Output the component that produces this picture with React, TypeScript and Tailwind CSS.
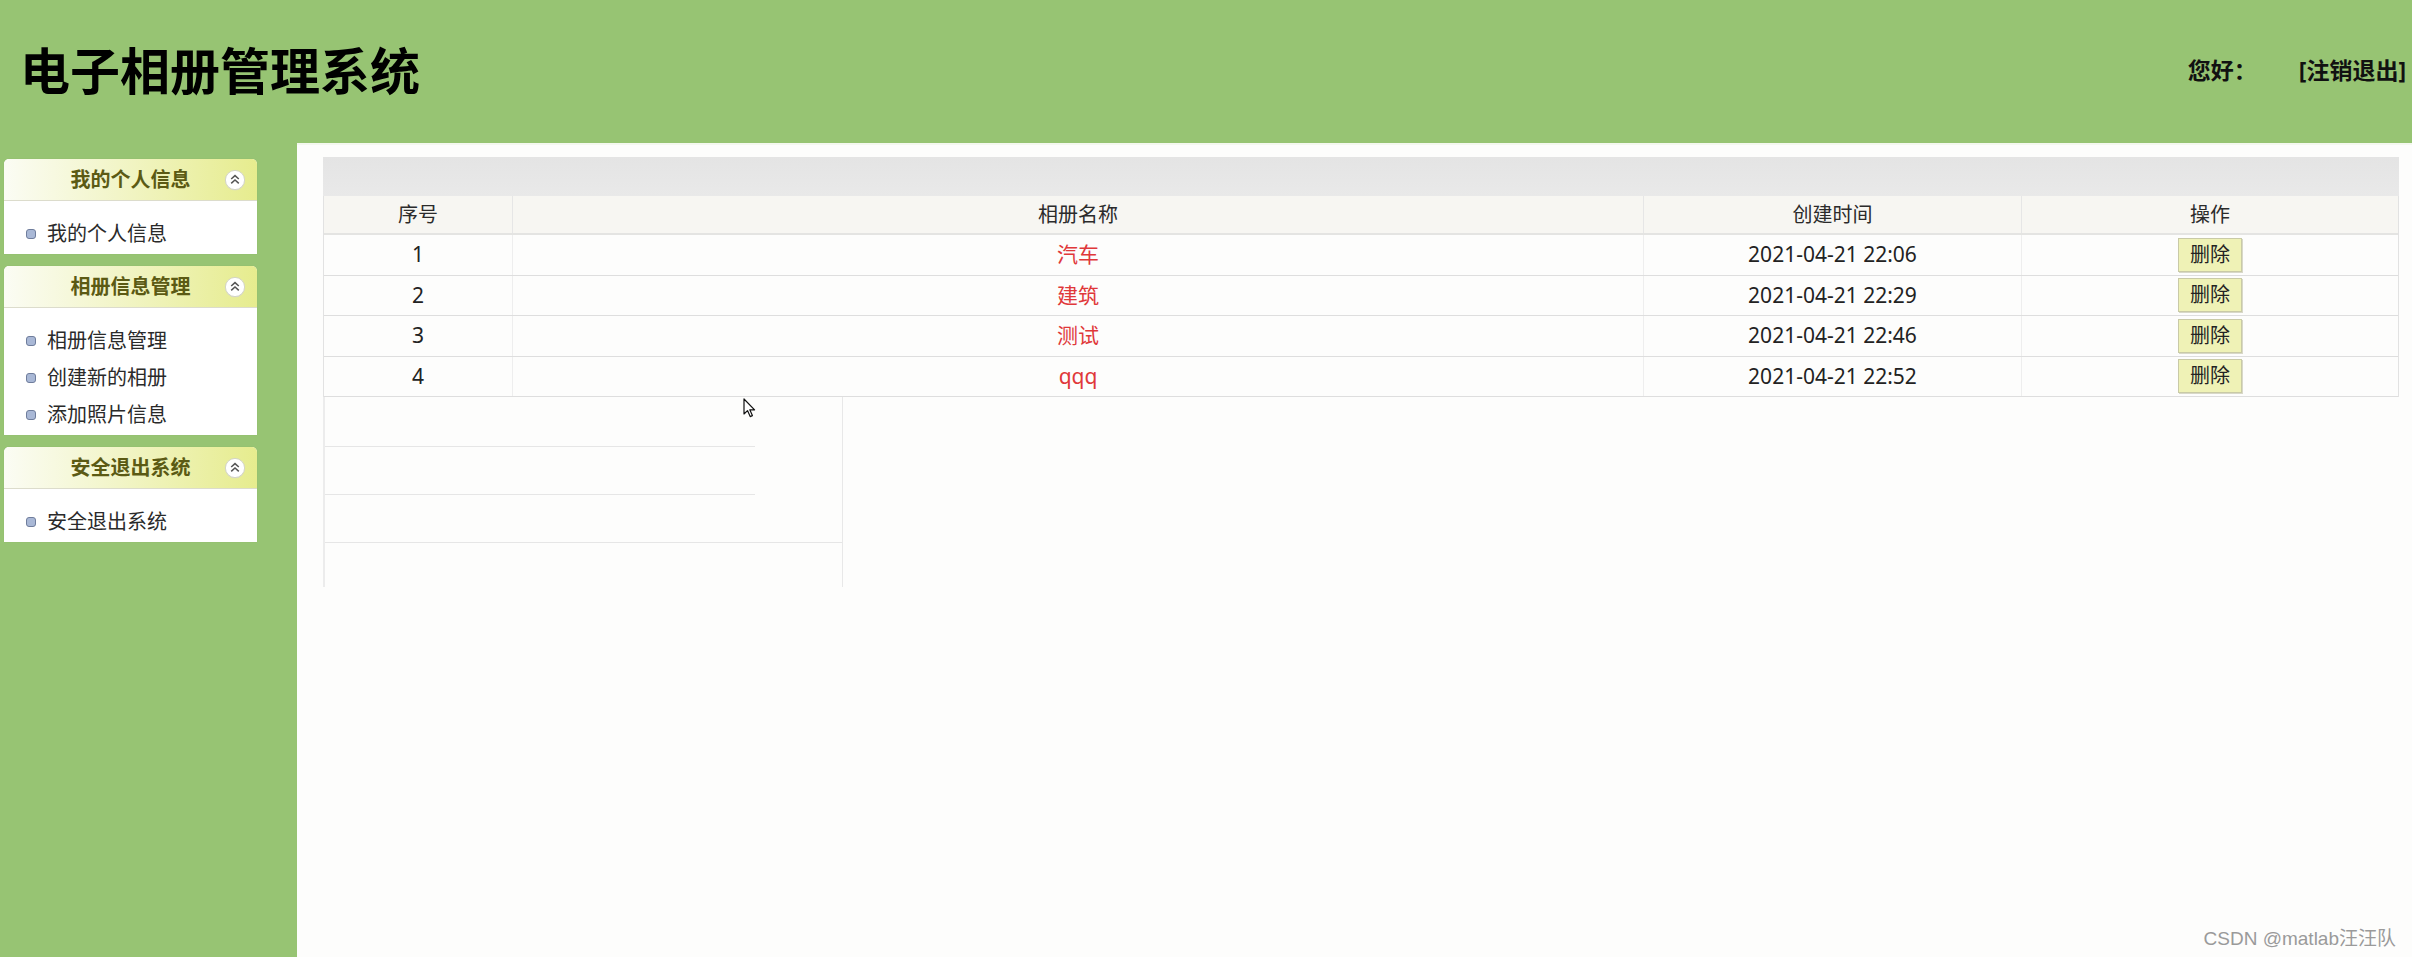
import React from "react";

const menus = [
  { title: "我的个人信息", items: ["我的个人信息"] },
  { title: "相册信息管理", items: ["相册信息管理", "创建新的相册", "添加照片信息"] },
  { title: "安全退出系统", items: ["安全退出系统"] },
];

const albums = [
  { id: 1, name: "汽车", time: "2021-04-21 22:06" },
  { id: 2, name: "建筑", time: "2021-04-21 22:29" },
  { id: 3, name: "测试", time: "2021-04-21 22:46" },
  { id: 4, name: "qqq", time: "2021-04-21 22:52" },
];

function CollapseIcon() {
  return (
    <svg width="22" height="22" viewBox="0 0 22 22">
      <circle cx="11" cy="11.5" r="9.8" fill="#d9dacb" />
      <circle cx="11" cy="11" r="9.6" fill="#ffffff" stroke="#d4d5c4" strokeWidth="1" />
      <path d="M7.2 10 L11 6.6 L14.8 10" fill="none" stroke="#555555" strokeWidth="1.5" />
      <path d="M7.2 14.4 L11 11 L14.8 14.4" fill="none" stroke="#555555" strokeWidth="1.5" />
    </svg>
  );
}

function MenuPanel({ title, items }: { title: string; items: string[] }) {
  return (
    <div className="w-[253px] rounded-t-[5px] bg-white shadow-[0_0_1px_rgba(0,0,0,0.15)]">
      <div className="relative flex h-[42px] items-center justify-center rounded-t-[5px] border-b border-[#dcdccc] bg-[linear-gradient(90deg,#fbfcf4_0%,#f2f5c8_45%,#e6ec8e_100%)]">
        <span className="text-[20px] font-bold text-[#5b5a14]">{title}</span>
        <span className="absolute right-[11px] top-[10px] flex">
          <CollapseIcon />
        </span>
      </div>
      <div className="pt-[14px] pb-[2px]">
        {items.map((item) => (
          <div key={item} className="flex h-[37px] items-center pl-[22px]">
            <span className="mr-[11px] h-[10px] w-[10px] rounded-[3px] border border-[#6f7d9c] bg-[#a9b8d6]" />
            <span className="text-[20px] text-[#2a2a2a]">{item}</span>
          </div>
        ))}
      </div>
    </div>
  );
}

export default function App() {
  return (
    <div className="flex h-[957px] w-[2412px] flex-col overflow-hidden bg-[#97c473] font-['Noto_Sans','Noto_Sans_CJK_SC',sans-serif]">
      {/* Header */}
      <header className="flex h-[143px] shrink-0 items-center justify-between pl-[20px] pr-[6px]">
        <h1 className="pb-[2px] text-[50px] font-bold leading-none text-black">电子相册管理系统</h1>
        <div className="flex items-center pb-[2px] text-[23px] font-bold text-[#111]">
          <span>您好：</span>
          <span className="ml-[42px]">[注销退出]</span>
        </div>
      </header>

      <div className="flex min-h-0 flex-1">
        {/* Sidebar */}
        <aside className="flex w-[297px] shrink-0 flex-col gap-[12px] pl-[4px] pt-[16px]">
          {menus.map((m) => (
            <MenuPanel key={m.title} title={m.title} items={m.items} />
          ))}
        </aside>

        {/* Main */}
        <main className="relative flex-1 border-t-2 border-[#f4f8ef] bg-[#fdfdfc] pl-[26px] pr-[13px] pt-[12px]">
          <div className="h-[39px] bg-[linear-gradient(180deg,#e4e4e4,#e9e9e9)]" />
          <div className="border-l border-r border-[#e2e2e2]">
            <div className="grid h-[39px] grid-cols-[189px_1131px_378px_1fr] border-b-2 border-[#e4e4e2] bg-[#f7f6f2] text-[20px] text-[#2b2b2b]">
              <div className="flex items-center justify-center border-r border-[#e6e6e6]">序号</div>
              <div className="flex items-center justify-center border-r border-[#e6e6e6]">相册名称</div>
              <div className="flex items-center justify-center border-r border-[#e6e6e6]">创建时间</div>
              <div className="flex items-center justify-center">操作</div>
            </div>
            {albums.map((a) => (
              <div
                key={a.id}
                className="grid h-[40.5px] grid-cols-[189px_1131px_378px_1fr] border-b border-[#dedede] text-[21px]"
              >
                <div className="flex items-center justify-center border-r border-[#eeeeee] text-[#222]">{a.id}</div>
                <div className="flex items-center justify-center border-r border-[#eeeeee] text-[#e0383a]">{a.name}</div>
                <div className="flex items-center justify-center border-r border-[#eeeeee] text-[#222]">{a.time}</div>
                <div className="flex items-center justify-center">
                  <button className="flex h-[34px] w-[64px] items-center justify-center border border-[#c9caa6] bg-[#eff2b6] text-[20px] text-[#222] shadow-[1px_1px_0_#d8d8c8]">
                    删除
                  </button>
                </div>
              </div>
            ))}
          </div>

          {/* faint leftover grid lines */}
          <div className="h-[190px] w-[520px] border-l-2 border-r border-l-[#ececec] border-r-[#e8e8e8]">
            <div className="h-[50px] w-[430px] border-b border-[#e6e6e6]" />
            <div className="h-[48px] w-[430px] border-b border-[#e6e6e6]" />
            <div className="h-[48px] w-full border-b border-[#e6e6e6]" />
          </div>

          {/* mouse pointer */}
          <svg
            className="absolute left-[446px] top-[253px]"
            width="13"
            height="20"
            viewBox="0 0 13 20"
          >
            <path
              d="M1 1 L1 16 L4.5 12.6 L7.2 18.6 L9.4 17.6 L6.8 11.8 L11.6 11.8 Z"
              fill="#ffffff"
              stroke="#111111"
              strokeWidth="1.2"
              strokeLinejoin="round"
            />
          </svg>

          <div className="absolute bottom-[4px] right-[16px] font-['Liberation_Sans','Noto_Sans_CJK_SC',sans-serif] text-[19px] text-[#9a9a9a]">
            CSDN @matlab汪汪队
          </div>
        </main>
      </div>
    </div>
  );
}
